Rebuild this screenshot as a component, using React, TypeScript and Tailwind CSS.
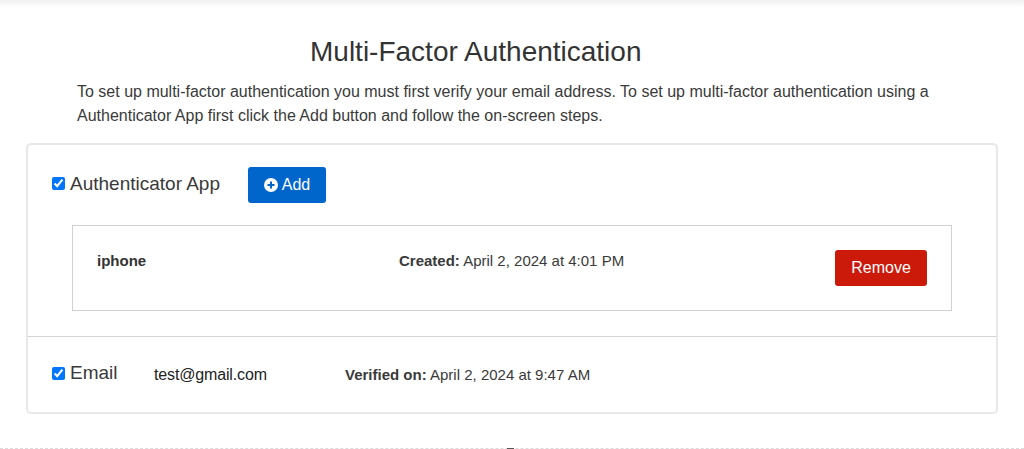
import React from 'react';

const font = { fontFamily: '"Liberation Sans", Arial, sans-serif' };

export default function App() {
  return (
    <div className="relative h-[449px] w-[1024px] overflow-hidden bg-white flex flex-col text-[#333]" style={font}>
      {/* top shadow strip */}
      <div className="h-[8px] bg-gradient-to-b from-[#f0f0f0] to-white" />

      <h1 className="mt-[26px] ml-[310px] text-[28px] leading-[36px] font-normal text-[#333]">
        Multi-Factor Authentication
      </h1>
      <p className="mt-[10px] ml-[77px] w-[880px] text-[16px] leading-[24px] text-[#3a3a3a]">
        To set up multi-factor authentication you must first verify your email address. To set up multi-factor authentication using a Authenticator App first click the Add button and follow the on-screen steps.
      </p>

      {/* card */}
      <div className="mt-[15px] ml-[26px] w-[972px] h-[271px] border-2 border-[#e8e8e8] rounded-[5px] flex flex-col">
        <div className="h-[192px] border-b border-[#d4d4d4] pt-[22px] pl-[24px] pr-[44px] flex flex-col">
          <div className="flex items-center h-[36px]">
            <input type="checkbox" defaultChecked className="w-[13px] h-[13px] mb-[3px] accent-[#0075ff]" />
            <span className="ml-[5px] mb-[2px] text-[19px] text-[#3a3a3a]">Authenticator App</span>
            <button className="ml-[28px] w-[78px] h-[36px] rounded-[3px] bg-[#0066cc] text-white text-[16px] flex items-center justify-center gap-[4px]">
              <svg width="14" height="14" viewBox="0 0 14 14">
                <circle cx="7" cy="7" r="7" fill="#fff" />
                <path d="M7 3.5v7M3.5 7h7" stroke="#0066cc" strokeWidth="2" />
              </svg>
              Add
            </button>
          </div>

          <div className="mt-[22px] ml-[20px] h-[86px] border border-[#d0d0d0] flex">
            <div className="w-[326px] pl-[24px] pt-[25px] text-[15px] leading-[20px] font-bold text-[#333]">iphone</div>
            <div className="flex-1 pt-[25px] text-[15px] leading-[20px] text-[#3a3a3a]">
              <b>Created:</b> April 2, 2024 at 4:01 PM
            </div>
            <div className="pr-[24px] pt-[24px]">
              <button className="w-[92px] h-[36px] rounded-[3px] bg-[#cc1a0a] text-white text-[16px]">Remove</button>
            </div>
          </div>
        </div>

        <div className="flex-1 pl-[24px] flex items-center">
          <input type="checkbox" defaultChecked className="w-[13px] h-[13px] mb-[2px] accent-[#0075ff]" />
          <span className="ml-[5px] mb-[2px] w-[84px] text-[19px] text-[#3a3a3a]">Email</span>
          <span className="w-[191px] text-[16px] tracking-[-0.15px] text-[#222]">test@gmail.com</span>
          <span className="mt-[1px] text-[15px] text-[#3a3a3a]">
            <b>Verified on:</b> April 2, 2024 at 9:47 AM
          </span>
        </div>
      </div>

      {/* footer edge */}
      <div className="mt-[34px] h-px border-t border-dashed border-[#dcdcdc]" />
      {/* clipped top of something below the fold */}
      <div className="absolute left-[507px] top-[448px] w-[7px] h-px bg-[#555]" />
    </div>
  );
}
